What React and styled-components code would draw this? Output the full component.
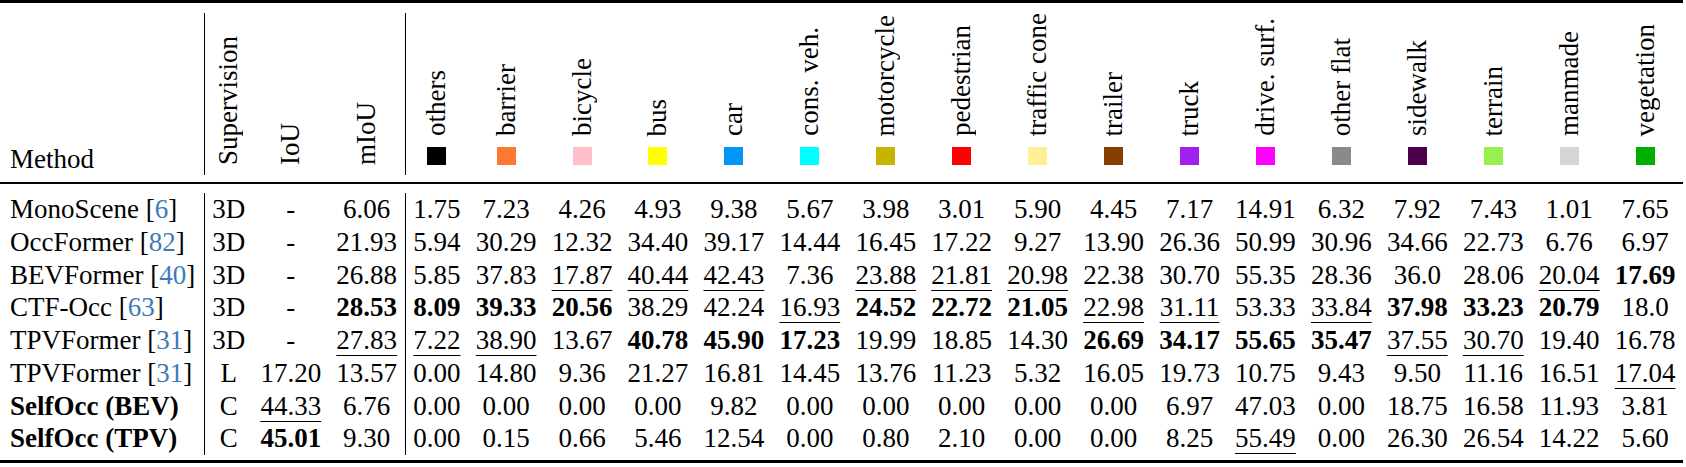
import React from "react";
import styled, { createGlobalStyle } from "styled-components";

const Global = createGlobalStyle`
  html, body { margin: 0; padding: 0; background: #fff; }
  body { font-family: "Liberation Serif", "Times New Roman", serif; color: #000; }
`;

const FS = 27;
const PAD = 7.6;

const Table = styled.table`
  border-collapse: separate;
  border-spacing: 0;
  font-size: ${FS}px;
  font-family: "Liberation Serif", "Times New Roman", serif;
  color: #000;
`;

const RuleCell = styled.td`
  padding: ${(p) => p.$before}px 0 ${(p) => p.$after}px;
  line-height: 0;
`;

const Rule = styled.div`
  height: ${(p) => p.$w}px;
  background: #000;
`;

const HeadRow = styled.tr`
  height: 162px;
`;

const MethodHead = styled.th`
  width: 186px;
  padding: 0 ${PAD}px 0 10px;
  text-align: left;
  vertical-align: bottom;
  font-weight: normal;
  line-height: 32.5px;
  border-right: 1px solid #000;
`;

const RotHead = styled.th`
  padding: 0 ${PAD}px 10px;
  vertical-align: bottom;
  font-weight: normal;
  border-right: ${(p) => (p.$sep ? "1px solid #000" : "none")};
`;

const Stack = styled.div`
  display: flex;
  flex-direction: column;
  align-items: center;
  gap: 11px;
`;

const VText = styled.span`
  writing-mode: vertical-rl;
  transform: rotate(180deg);
  line-height: 1;
  white-space: nowrap;
`;

const Swatch = styled.span`
  display: block;
  width: 19px;
  height: 18px;
  background: ${(p) => p.$c};
`;

const BodyRow = styled.tr``;

const MethodCell = styled.td`
  padding: 0 ${PAD}px 0 10px;
  line-height: 32.75px;
  text-align: left;
  white-space: nowrap;
  font-weight: ${(p) => (p.$bold ? "bold" : "normal")};
  border-right: 1px solid #000;
`;

const NumCell = styled.td`
  padding: 0 ${PAD}px;
  line-height: 32.75px;
  text-align: center;
  white-space: nowrap;
  border-right: ${(p) => (p.$sep ? "1px solid #000" : "none")};
`;

const Cite = styled.span`
  color: #3b7cb8;
`;

const Val = styled.span`
  font-weight: ${(p) => (p.$b ? "bold" : "normal")};
  text-decoration: ${(p) => (p.$u ? "underline" : "none")};
  text-decoration-thickness: 1.4px;
  text-underline-offset: 6px;
`;

const classes = [
  ["others", "#000000"],
  ["barrier", "#ff7832"],
  ["bicycle", "#ffc0cb"],
  ["bus", "#ffff00"],
  ["car", "#0096f5"],
  ["cons. veh.", "#00ffff"],
  ["motorcycle", "#c8b400"],
  ["pedestrian", "#ff0000"],
  ["traffic cone", "#fff096"],
  ["trailer", "#873c00"],
  ["truck", "#a020f0"],
  ["drive. surf.", "#ff00ff"],
  ["other flat", "#8b8989"],
  ["sidewalk", "#4b004b"],
  ["terrain", "#96f050"],
  ["manmade", "#d5d5d5"],
  ["vegetation", "#00af00"],
];

const rows = [
  { name: "MonoScene", cite: "6", sup: "3D", iou: "-", miou: "6.06",
    v: "1.75 7.23 4.26 4.93 9.38 5.67 3.98 3.01 5.90 4.45 7.17 14.91 6.32 7.92 7.43 1.01 7.65" },
  { name: "OccFormer", cite: "82", sup: "3D", iou: "-", miou: "21.93",
    v: "5.94 30.29 12.32 34.40 39.17 14.44 16.45 17.22 9.27 13.90 26.36 50.99 30.96 34.66 22.73 6.76 6.97" },
  { name: "BEVFormer", cite: "40", sup: "3D", iou: "-", miou: "26.88",
    v: "5.85 37.83 _17.87 _40.44 _42.43 7.36 _23.88 _21.81 _20.98 22.38 30.70 55.35 28.36 36.0 28.06 _20.04 **17.69" },
  { name: "CTF-Occ", cite: "63", sup: "3D", iou: "-", miou: "**28.53",
    v: "**8.09 **39.33 **20.56 38.29 42.24 _16.93 **24.52 **22.72 **21.05 _22.98 _31.11 53.33 _33.84 **37.98 **33.23 **20.79 18.0" },
  { name: "TPVFormer", cite: "31", sup: "3D", iou: "-", miou: "_27.83",
    v: "_7.22 _38.90 13.67 **40.78 **45.90 **17.23 19.99 18.85 14.30 **26.69 **34.17 **55.65 **35.47 _37.55 _30.70 19.40 16.78" },
  { name: "TPVFormer", cite: "31", sup: "L", iou: "17.20", miou: "13.57",
    v: "0.00 14.80 9.36 21.27 16.81 14.45 13.76 11.23 5.32 16.05 19.73 10.75 9.43 9.50 11.16 16.51 _17.04" },
  { name: "SelfOcc (BEV)", bold: true, sup: "C", iou: "_44.33", miou: "6.76",
    v: "0.00 0.00 0.00 0.00 9.82 0.00 0.00 0.00 0.00 0.00 6.97 47.03 0.00 18.75 16.58 11.93 3.81" },
  { name: "SelfOcc (TPV)", bold: true, sup: "C", iou: "**45.01", miou: "9.30",
    v: "0.00 0.15 0.66 5.46 12.54 0.00 0.80 2.10 0.00 0.00 8.25 _55.49 0.00 26.30 26.54 14.22 5.60" },
];

function V({ s }) {
  if (s.startsWith("**")) return <Val $b>{s.slice(2)}</Val>;
  if (s.startsWith("_")) return <Val $u>{s.slice(1)}</Val>;
  return <Val>{s}</Val>;
}

const NCOLS = 4 + classes.length;

export default function App() {
  return (
    <>
      <Global />
      <Table>
        <tbody>
          <tr>
            <RuleCell colSpan={NCOLS} $before={0} $after={10}>
              <Rule $w={3} />
            </RuleCell>
          </tr>
          <HeadRow>
            <MethodHead>Method</MethodHead>
            <RotHead>
              <Stack>
                <VText>Supervision</VText>
              </Stack>
            </RotHead>
            <RotHead>
              <Stack>
                <VText>IoU</VText>
              </Stack>
            </RotHead>
            <RotHead $sep>
              <Stack>
                <VText>mIoU</VText>
              </Stack>
            </RotHead>
            {classes.map(([n, c]) => (
              <RotHead key={n}>
                <Stack>
                  <VText>{n}</VText>
                  <Swatch $c={c} />
                </Stack>
              </RotHead>
            ))}
          </HeadRow>
          <tr>
            <RuleCell colSpan={NCOLS} $before={7} $after={9}>
              <Rule $w={2} />
            </RuleCell>
          </tr>
          {rows.map((r, i) => (
            <BodyRow key={i}>
              <MethodCell $bold={r.bold}>
                {r.name}
                {r.cite && (
                  <>
                    {" "}[<Cite>{r.cite}</Cite>]
                  </>
                )}
              </MethodCell>
              <NumCell>{r.sup}</NumCell>
              <NumCell>
                <V s={r.iou} />
              </NumCell>
              <NumCell $sep>
                <V s={r.miou} />
              </NumCell>
              {r.v.split(" ").map((s, j) => (
                <NumCell key={j}>
                  <V s={s} />
                </NumCell>
              ))}
            </BodyRow>
          ))}
          <tr>
            <RuleCell colSpan={NCOLS} $before={5} $after={0}>
              <Rule $w={3} />
            </RuleCell>
          </tr>
        </tbody>
      </Table>
    </>
  );
}
